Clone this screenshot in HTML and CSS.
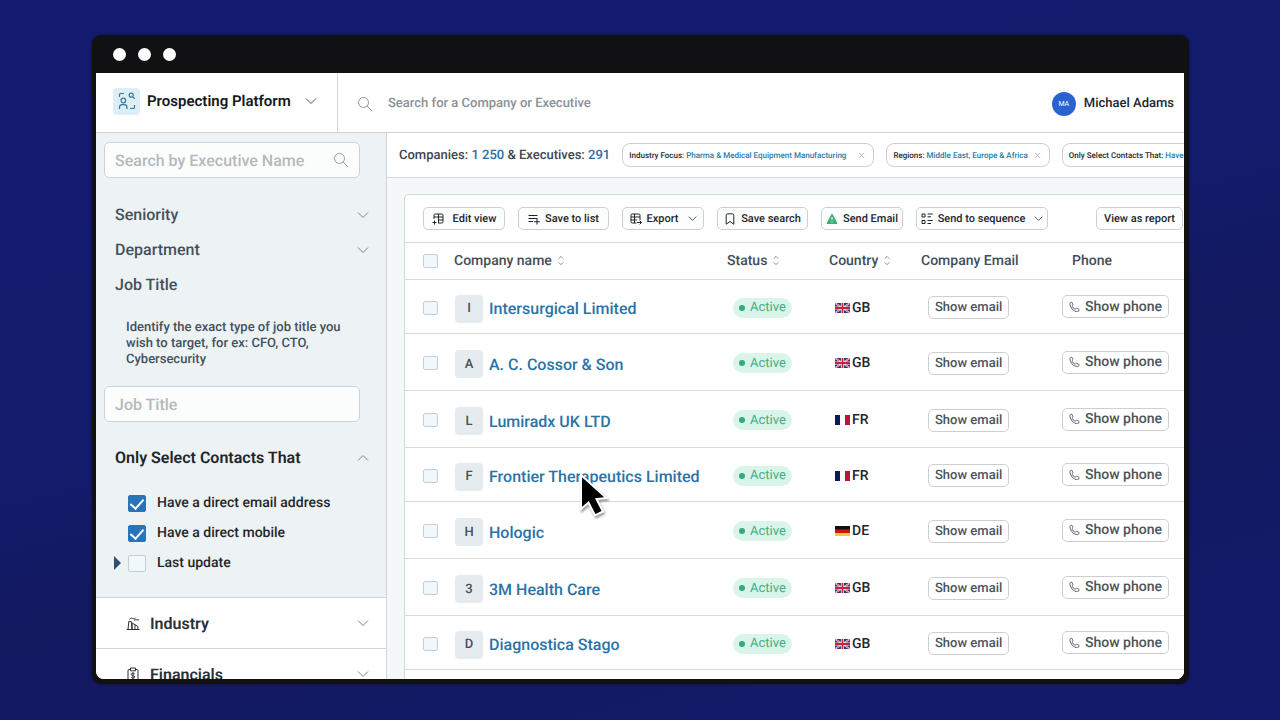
FILE: index.html
```html
<!DOCTYPE html>
<html lang="en">
<head>
    <meta charset="UTF-8">
    <meta name="viewport" content="width=device-width, initial-scale=1.0">
    <title>Prospecting Platform</title>
    <link rel="stylesheet" href="styles.css">
</head>
<body>
    <!-- icons -->
    <svg class="sprite" aria-hidden="true">
        <symbol id="down" viewBox="0 0 12 12"><path d="M1 3.5l5 5 5-5"/></symbol>
        <symbol id="up" viewBox="0 0 12 12"><path d="M1 8.5l5-5 5 5"/></symbol>
        <symbol id="search" viewBox="0 0 16 16"><circle cx="6.5" cy="6.5" r="5"/><path d="M10.2 10.2l5 5"/></symbol>
        <symbol id="close" viewBox="0 0 8 8"><path d="M1 1l6 6M7 1l-6 6"/></symbol>
        <symbol id="sort" viewBox="0 0 8 12"><path d="M1.5 4L4 1.500l2.500 2.500M1.500 8L4 10.500 6.500 8"/></symbol>
        <symbol id="phone" viewBox="0 0 12 12"><path d="M1 2.200C1 1.400 2 .8 2.800.8c.5 0 .7.400.9 1l.5 1.400c.2.6-.1.9-.6 1.300-.4.3-.3.7 0 1.200.6 1 1.400 1.800 2.400 2.400.500.3.9.3 1.200-.1.4-.5.8-.7 1.300-.5l1.500.6c.6.200 1 .5 1 1 0 .9-.7 1.900-1.600 1.900C5 11 1 6.800 1 2.200z"/></symbol>
        <symbol id="view" viewBox="0 0 12 12"><path d="M2 6V2.200C2 1.500 2.500 1 3.200 1h6.600c.7 0 1.200.5 1.200 1.200v6.600c0 .7-.5 1.200-1.200 1.200H6M2 4h9M6.500 1v9M6.500 7H11M2.500 7.500v4M.5 9.500h4"/></symbol>
        <symbol id="list" viewBox="0 0 12 12"><path d="M.5 2.500h9M.5 5.500h9M.5 8.500h4.500M9 6v5.500M6.200 8.700h5.600"/></symbol>
        <symbol id="export" viewBox="0 0 12 12"><path d="M6.500 10H2.200C1.500 10 1 9.500 1 8.800V2.200C1 1.500 1.500 1 2.200 1h6.600c.7 0 1.200.5 1.200 1.200V7M1 4h9M1 7h6M4.500 1v9M7 9.500h4.500M9.700 7.700l1.800 1.800-1.800 1.800"/></symbol>
        <symbol id="mark" viewBox="0 0 10 12"><path d="M1.200 2.200C1.200 1.300 1.700.8 2.500.8h5c.8 0 1.300.5 1.300 1.400v9L5 8.500l-3.800 2.700z"/></symbol>
        <symbol id="sequence" viewBox="0 0 12 12"><path d="M1 1h3v3H1zM1 7.500h3v3H1zM6.500 1h5.200M6.500 3.800h3.500M6.500 7.500h5.200M6.500 10.500h3.500"/></symbol>
        <symbol id="people" viewBox="0 0 18 18"><path d="M1.500 5V2.500c0-.6.4-1 1-1H6M16.500 13v2.500c0 .6-.4 1-1 1H12M1.500 17v-1.500c0-1.700 1.200-2.800 2.800-2.800h1.900c1.600 0 2.800 1.100 2.800 2.800V17M14.800 4.800l2 2"/><circle cx="5.300" cy="8.500" r="2.300"/><circle cx="13.200" cy="3.200" r="2"/></symbol>
        <symbol id="industry" viewBox="0 0 14 14"><path d="M.5 13h13M2 13l.8-8h2.400l.9 8M6.100 13V6.500l2.900 1.700V13M9 8.200l2.900 1.800v3M3.500 3c.8-1.500 2-1.700 3.200-1 1.200.6 2.200.4 3-.8M8 4c1-.9 2-1 3-.6.8.3 1.500.1 2-.6"/></symbol>
        <symbol id="financials" viewBox="0 0 12 15"><path d="M3.500 2.500H2C1.400 2.500 1 2.900 1 3.500V13c0 .6.4 1 1 1h8c.6 0 1-.4 1-1V3.500c0-.6-.4-1-1-1H8.500M3.500 1h5v2.800h-5zM7.800 7C7.500 6.400 6.900 6.200 6 6.200c-1 0-1.800.4-1.800 1.200 0 1.800 3.600.8 3.600 2.500 0 .8-.8 1.200-1.800 1.200-.9 0-1.600-.3-1.800-.9M6 5.300v6.700"/></symbol>
        <symbol id="GB" viewBox="0 0 15 10"><path class="navy" d="M0 0h15v10H0z"/><path class="white-line" d="M0 0l15 10M15 0L0 10"/><path class="red-line thin" d="M0 0l15 10M15 0L0 10"/><path class="white-line wide" d="M7.500 0v10M0 5h15"/><path class="red-line" d="M7.500 0v10M0 5h15"/></symbol>
        <symbol id="FR" viewBox="0 0 15 10"><path fill="#0b1a5e" d="M0 0h5v10H0z"/><path fill="#fff" d="M5 0h5v10H5z"/><path fill="#b5173c" d="M10 0h5v10h-5z"/></symbol>
        <symbol id="DE" viewBox="0 0 15 10"><path fill="#111" d="M0 0h15v4H0z"/><path fill="#cf1409" d="M0 3.500h15v3.500H0z"/><path fill="#fdc533" d="M0 7h15v3H0z"/></symbol>
    </svg>

    <div class="window">
        <div class="titlebar"><i></i><i></i><i></i></div>
        <div class="app">
            <header class="header">
                <button class="brand">
                    <span class="logo"><svg><use href="#people"/></svg></span>
                    <span>Prospecting Platform</span>
                    <svg class="icon"><use href="#down"/></svg>
                </button>
                <label class="search">
                    <svg><use href="#search"/></svg>
                    <input type="text" placeholder="Search for a Company or Executive" aria-label="Search for a Company or Executive">
                </label>
                <div class="user"><span class="avatar">MA</span>Michael Adams</div>
            </header>

            <div class="content">
                <aside class="sidebar">
                    <div class="filters">
                        <label class="field">
                            <input type="text" placeholder="Search by Executive Name" aria-label="Search by Executive Name">
                            <svg><use href="#search"/></svg>
                        </label>
                        <div class="groups">
                            <button class="group">Seniority<svg class="icon"><use href="#down"/></svg></button>
                            <button class="group">Department<svg class="icon"><use href="#down"/></svg></button>
                            <label class="group" for="job">Job Title</label>
                        </div>
                        <p class="help">Identify the exact type of job title you wish to target, for ex: CFO, CTO, Cybersecurity</p>
                        <div class="field"><input type="text" id="job" placeholder="Job Title"></div>
                        <button class="group open">Only Select Contacts That<svg class="icon"><use href="#up"/></svg></button>
                        <ul class="checks">
                            <li><label><input type="checkbox" checked>Have a direct email address</label></li>
                            <li><label><input type="checkbox" checked>Have a direct mobile</label></li>
                            <li class="more"><label><input type="checkbox">Last update</label></li>
                        </ul>
                    </div>
                    <button class="section"><svg><use href="#industry"/></svg>Industry<svg class="icon"><use href="#down"/></svg></button>
                    <button class="section"><svg><use href="#financials"/></svg>Financials<svg class="icon"><use href="#down"/></svg></button>
                </aside>

                <main class="main">
                    <div class="summary">
                        <p class="count">Companies: <b>1 250</b> &amp; Executives: <b>291</b></p>
                        <span class="chip wide">Industry Focus: <em>Pharma &amp; Medical Equipment Manufacturing</em><button aria-label="Remove"><svg><use href="#close"/></svg></button></span>
                        <span class="chip">Regions: <em>Middle East, Europe &amp; Africa</em><button aria-label="Remove"><svg><use href="#close"/></svg></button></span>
                        <span class="chip">Only Select Contacts That: <em>Have</em><button aria-label="Remove"><svg><use href="#close"/></svg></button></span>
                    </div>

                    <div class="panel">
                        <div class="toolbar">
                            <button class="small loose"><svg><use href="#view"/></svg>Edit view</button>
                            <button class="medium"><svg><use href="#list"/></svg>Save to list</button>
                            <button class="small"><svg><use href="#export"/></svg>Export<svg class="arrow"><use href="#down"/></svg></button>
                            <button class="medium"><svg><use href="#mark"/></svg>Save search</button>
                            <button class="small"><svg class="alert" viewBox="0 0 12 12"><path d="M6 1l5 9.500H1z"/><path class="bang" d="M6 4v3M6 8.500v1"/></svg>Send Email</button>
                            <button class="large"><svg><use href="#sequence"/></svg>Send to sequence<svg class="arrow"><use href="#down"/></svg></button>
                            <button class="report">View as report</button>
                        </div>
                        <table>
                            <thead>
                                <tr>
                                    <th class="pick"><input type="checkbox" aria-label="Select all"></th>
                                    <th class="name">Company name<svg class="sort"><use href="#sort"/></svg></th>
                                    <th class="status">Status<svg class="sort"><use href="#sort"/></svg></th>
                                    <th class="country">Country<svg class="sort"><use href="#sort"/></svg></th>
                                    <th class="email">Company Email</th>
                                    <th class="tel">Phone</th>
                                </tr>
                            </thead>
                            <tbody class="companyList"></tbody>
                        </table>
                    </div>
                </main>
            </div>
        </div>
    </div>

    <script>
        var companies = [
            {name: "Intersurgical Limited", country: "GB", short: true},
            {name: "A. C. Cossor & Son", country: "GB"},
            {name: "Lumiradx UK LTD", country: "FR"},
            {name: "Frontier Therapeutics Limited", country: "FR", short: true, hover: true},
            {name: "Hologic", country: "DE"},
            {name: "3M Health Care", country: "GB"},
            {name: "Diagnostica Stago", country: "GB", short: true}
        ];
        var pointer = '<svg class="pointer" viewBox="0 0 30 46"><path d="M2 2v34l7.500-6.500 6.500 13 8-4-6.500-12.500 10-1z"/></svg>';

        var tag = "";
        for(var i=0;i<companies.length;i++){
            var c = companies[i];
            var name = c.name.replace("&", "&amp;");

            tag += '<tr' + (c.short ? ' class="short"' : '') + '>';
            tag += '<td class="pick"><input type="checkbox" aria-label="Select ' + name + '"></td>';
            tag += '<td class="name"><div class="company"><span class="letter">' + c.name[0] + '</span>';
            tag += '<a href="#">' + name + '</a>' + (c.hover ? pointer : '') + '</div></td>';
            tag += '<td class="status"><span class="active">Active</span></td>';
            tag += '<td class="country"><span class="flag"><svg><use href="#' + c.country + '"/></svg>' + c.country + '</span></td>';
            tag += '<td class="email"><button class="show">Show email</button></td>';
            tag += '<td class="tel"><button class="show"><svg><use href="#phone"/></svg>Show phone</button></td>';
            tag += '</tr>';
        }
        document.querySelector(".companyList").innerHTML = tag;
    </script>
</body>
</html>
```

FILE: styles.css
```css
*{padding: 0; margin: 0; box-sizing: border-box;}
ul,li{list-style: none;}
body{height: 100vh; padding: 35px 91px 36px 92px; overflow: hidden; background: linear-gradient(165deg, #141b70 0%, #131b6c 45%, #12195f 60%, #131a6b 100%); font-family: Roboto, "Liberation Sans", sans-serif; font-weight: 500; color: #1f262b; text-rendering: geometricPrecision;}
button,input{font: inherit; color: inherit; background: none; border: 0; text-rendering: inherit;}
button{cursor: pointer;}
a{color: #2b73a6; text-decoration: none;}
svg{flex: none; fill: none; stroke: currentColor; stroke-width: 1;}
.sprite{position: absolute; width: 0; height: 0;}
.icon{width: 12px; height: 12px; color: #7d868c;}

.window{display: flex; flex-direction: column; height: 100%; padding: 0 5px 5px 4px; border-radius: 9px; background: #111012; box-shadow: 0 0 3px #0c0f3c;}
.titlebar{display: flex; flex: none; align-items: center; gap: 12px; height: 38px; padding-left: 17px;}
.titlebar i{width: 13px; height: 13px; border-radius: 50%; background: #fff;}
.app{display: flex; flex-direction: column; flex: 1; min-height: 0; overflow: hidden; border-radius: 0 0 8px 8px; background: #fff;}

/* header */
.header{display: flex; flex: none; height: 60px; border-bottom: 1px solid #d0d4d6;}
.brand{display: flex; align-items: center; width: 242px; padding: 0 20px 3px 17px; border-right: 1px solid #d0d4d6; font-size: 15px; font-weight: 600; color: #15191c;}
.brand .icon{margin-left: auto; color: #4a555e;}
.logo{display: flex; align-items: center; justify-content: center; width: 27px; height: 27px; margin-right: 7px; border-radius: 4px; background: #dceef6; color: #3d7397;}
.logo svg{width: 18px; height: 18px; stroke-width: 1.2;}
.search{display: flex; flex: 1; align-items: center; gap: 15px; padding: 2px 0 0 19px; color: #8b9195;}
.search svg{width: 16px; height: 16px;}
.search input{flex: 1; font-size: 13px; outline: none;}
::placeholder{color: inherit; opacity: 1;}
.user{display: flex; align-items: center; gap: 8px; padding: 2px 10px 0 0; font-size: 13px;}
.avatar{display: flex; align-items: center; justify-content: center; width: 24px; height: 24px; border-radius: 50%; background: #2a63d0; color: #fff; font-size: 7px; font-weight: 400;}

.content{display: flex; flex: 1; min-height: 0;}

/* sidebar */
.sidebar{flex: none; width: 291px; overflow: hidden; border-right: 1px solid #d0d5d8;}
.filters{padding: 9px 8px 19px; background: #edf2f4;}
.field{display: flex; align-items: center; width: 256px; height: 36px; padding: 0 10px; border: 1px solid #cdd3d6; border-radius: 5px; background: #fbfdfd; color: #b4b9bb; font-size: 16px;}
.field input{flex: 1; min-width: 0; outline: none;}
.field svg{width: 16px; height: 16px; color: #92999d;}
.groups{margin-top: 19px;}
.group{display: flex; align-items: center; justify-content: space-between; width: 100%; height: 35px; padding: 0 9px 0 11px; font-size: 16px; color: #45515b;}
.help{width: 225px; margin: 18px 0 18px 22px; font-size: 13px; line-height: 16px; color: #45515b;}
.group.open{margin-top: 18px; color: #1f262b; font-weight: 600;}
.checks{margin: 13px 0 0 24px;}
.checks label{display: flex; align-items: center; gap: 11px; height: 30px; font-size: 14px;}
.more{position: relative;}
.more::before{content: ""; position: absolute; left: -14px; top: 8px; border: 7px solid transparent; border-left-color: #2f4f6d; border-right-width: 0;}
input[type=checkbox]{appearance: none; flex: none; display: block; width: 15px; height: 14px; border: 1px solid #c5d0d6; border-radius: 2px; background: #f1f8fb;}
.checks input[type=checkbox]{width: 18px; height: 17px;}
.checks input[type=checkbox]:checked{display: flex; justify-content: center; border-color: #2b73b8; background: #2b73b8;}
.checks input:checked::before{content: ""; width: 6px; height: 11px; border: solid #fff; border-width: 0 2px 2px 0; transform: rotate(42deg);}
.section{display: flex; align-items: center; width: 100%; height: 51px; padding: 0 17px 0 30px; border-top: 1px solid #d0d5d8; background: #fff; font-size: 16px; font-weight: 600; color: #2a3136;}
.section svg{width: 14px; height: 15px; margin-right: 10px;}
.section .icon{width: 12px; height: 12px; margin: 0 0 0 auto;}

/* results */
.main{display: flex; flex-direction: column; flex: 1; min-width: 0; background: #f5f8f8;}
.summary{display: flex; flex: none; align-items: center; height: 45px; padding-left: 12px; gap: 12px; overflow: hidden; border-bottom: 1px solid #d3d8da; background: #fff; white-space: nowrap;}
.count{font-size: 13px; color: #3b464f;}
.count b{font-weight: 500; color: #2b6ca8;}
.chip{display: flex; flex: none; align-items: center; height: 24px; padding: 0 8px 0 6px; border: 1px solid #cbcfd1; border-radius: 8px; background: #fff; font-size: 8px; white-space: pre;}
.chip em{font-style: normal; color: #2b7aa8;}
.chip button{display: flex; margin-left: 6px; color: #aab0b4;}
.chip.wide button{margin-left: 12px;}
.chip svg{width: 7px; height: 7px;}
.panel{flex: 1; margin: 16px 0 0 17px; overflow: hidden; border: solid #d3d8da; border-width: 1px 0 0 1px; border-radius: 5px 0 0 0; background: #fff;}
.toolbar{display: flex; align-items: center; gap: 13px; height: 47px; padding: 0 1px 0 18px; white-space: nowrap;}
.toolbar button{display: flex; flex: none; align-items: center; justify-content: center; gap: 5px; height: 23px; border: 1px solid #ccd0d3; border-radius: 5px; background: #fcfdfd; font-size: 11px;}
.toolbar svg{width: 12px; height: 12px;}
.toolbar .small{width: 82px;}
.toolbar .medium{width: 91px;}
.toolbar .large{width: 132px;}
.toolbar .loose{gap: 9px;}
.toolbar .arrow{width: 9px; height: 9px; margin-left: 4px;}
.toolbar .report{margin-left: auto; padding: 0 7px;}
.toolbar .alert{fill: #3fae77; stroke: #3fae77; stroke-linejoin: round;}
.alert .bang{stroke: #fff;}

table{width: 100%; table-layout: fixed; border-collapse: collapse; border-bottom: 1px solid #d7dadc; white-space: nowrap;}
tr{height: 57px; border-top: 1px solid #d7dadc;}
tr.short{height: 54px;}
thead tr{height: 37px;}
th{font-size: 14px; font-weight: 500; text-align: left; color: #434e58;}
td{padding-top: 2px; vertical-align: middle;}
.sort{width: 8px; height: 11px; margin-left: 5px; vertical-align: -1px; color: #7d868c;}
.pick{width: 49px; padding-left: 18px;}
.status{width: 102px;}
.country{width: 92px;}
.email{width: 151px;}
.tel{width: 112px;}
td.status,td.country{padding-left: 6px;}
td.email{padding-left: 7px;}
td.tel{position: relative; left: -10px; padding-top: 0;}
.company{position: relative; display: flex; align-items: center; gap: 6px; padding: 2px 0 0 1px; font-size: 16px;}
.letter{display: flex; align-items: center; justify-content: center; width: 28px; height: 28px; border-radius: 4px; background: #e6ebef; color: #45515b; font-size: 13px;}
.pointer{position: absolute; left: 125px; top: 12px; width: 30px; height: 46px; fill: #000; stroke: #fff; stroke-width: 2; filter: drop-shadow(1px 2px 1px #0006);}
.active{display: flex; align-items: center; gap: 5px; width: 59px; height: 20px; padding-left: 6px; border-radius: 10px; background: #d9f4e9; color: #3fae85; font-size: 13px; font-weight: 400;}
.active::before{content: ""; width: 6px; height: 6px; border-radius: 50%; background: #35a87c;}
.flag{display: flex; align-items: center; gap: 2px; font-size: 14px;}
.flag svg{width: 15px; height: 10px; stroke: none;}
.navy{fill: #2b2d6e;}
.white-line{stroke: #fff; stroke-width: 1.6;}
.white-line.wide{stroke-width: 3.2;}
.red-line{stroke: #c8203f; stroke-width: 1.8;}
.red-line.thin{stroke-width: .7;}
.show{display: flex; align-items: center; gap: 5px; height: 23px; padding: 0 6px; border: 1px solid #ccd0d3; border-radius: 5px; background: #fff; font-size: 14px; color: #4b545b;}
.email .show{font-size: 13px;}
.show svg{width: 11px; height: 12px;}
```
